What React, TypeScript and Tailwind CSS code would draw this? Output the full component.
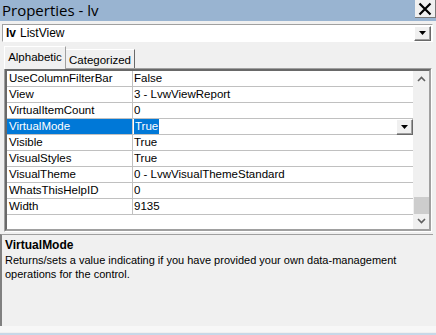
import React from 'react'

const rows: [string, string][] = [
  ['UseColumnFilterBar', 'False'],
  ['View', '3 - LvwViewReport'],
  ['VirtualItemCount', '0'],
  ['VirtualMode', 'True'],
  ['Visible', 'True'],
  ['VisualStyles', 'True'],
  ['VisualTheme', '0 - LvwVisualThemeStandard'],
  ['WhatsThisHelpID', '0'],
  ['Width', '9135'],
]

const DropArrow = () => (
  <svg width="7" height="4" viewBox="0 0 7 4">
    <path d="M0 0h7L3.5 4z" fill="#000" />
  </svg>
)

const DropButton = ({ className }: { className: string }) => (
  <div
    className={`flex items-center justify-center border border-t-white border-l-white border-r-[#696969] border-b-[#696969] bg-[#f0f0f0] shadow-[inset_-1px_-1px_0_#a0a0a0] ${className}`}
  >
    <DropArrow />
  </div>
)

export default function App() {
  return (
    <div
      className="flex h-[335px] w-[436px] flex-col overflow-hidden bg-[#f0f0f0] text-black"
      style={{ fontFamily: '"Liberation Sans", Arial, sans-serif' }}
    >
      {/* title bar */}
      <div className="flex h-[21px] items-start justify-between bg-[#99b4d1]">
        <span
          className="pl-[2px] pt-[1px] text-[15px] leading-[18px]"
          style={{ fontFamily: '"Segoe UI", "Open Sans", sans-serif' }}
        >
          Properties - lv
        </span>
        <div className="flex h-[18px] w-[21px] items-center justify-center border-r border-b border-[#7a7a7a] bg-[#f0f0f0]">
          <svg width="14" height="14" viewBox="0 0 14 14">
            <path d="M1.5 1.5L12.5 12.5M12.5 1.5L1.5 12.5" stroke="#000" strokeWidth="2.2" />
          </svg>
        </div>
      </div>

      {/* object combo */}
      <div className="mt-[3px] ml-[2px] flex h-[18px] w-[431px] items-center border border-t-[#a0a0a0] border-l-[#a0a0a0] border-r-white border-b-white bg-white">
        <div className="flex flex-1 items-center pl-[3px] text-[12px] leading-[14px]">
          <span className="font-bold">lv</span>
          <span className="ml-[4px]">ListView</span>
        </div>
        <DropButton className="mr-[1px] h-[15px] w-[17px]" />
      </div>

      {/* tabs */}
      <div className="mt-[4px] flex h-[22px] items-end pl-[4px] text-[11.5px] leading-[14px]">
        <div className="relative z-10 -mb-[1px] flex h-[23px] w-[62px] shrink-0 items-start justify-center border border-b-0 border-t-white border-l-white border-r-[#a0a0a0] bg-[#f0f0f0] pt-[3px]">
          Alphabetic
        </div>
        <div className="flex h-[19px] w-[69px] shrink-0 items-start justify-center border border-b-0 border-l-0 border-t-white border-r-[#696969] pt-[3px]">
          Categorized
        </div>
      </div>

      {/* grid frame */}
      <div className="mx-[4px] h-[164px] border border-t-[#a0a0a0] border-l-[#a0a0a0] border-r-white border-b-white">
        <div className="flex h-full border-2 border-t-[#696969] border-l-[#696969] border-r-[#a0a0a0] border-b-[#a0a0a0]">
          <div className="flex-1 bg-white text-[11.5px] leading-[15px]">
            {rows.map(([name, value]) => {
              const sel = name === 'VirtualMode'
              return (
                <div key={name} className="flex h-[16px] border-b border-[#c0c0c0]">
                  <div
                    className={`w-[126px] shrink-0 border-r border-[#c0c0c0] pl-[2px] ${sel ? 'bg-[#0078d7] text-white' : ''}`}
                  >
                    {name}
                  </div>
                  <div className="flex flex-1 items-start pl-[1px]">
                    <span className={sel ? 'bg-[#0078d7] px-[1px] text-white' : ''}>{value}</span>
                    {sel && <DropButton className="ml-auto h-[16px] w-[17px]" />}
                  </div>
                </div>
              )
            })}
          </div>
          {/* scrollbar */}
          <div className="flex w-[16px] flex-col items-center bg-[#f0f0f0]">
            <svg className="mt-[5px]" width="9" height="6" viewBox="0 0 9 6">
              <path d="M1 5L4.5 1.5L8 5" stroke="#606060" strokeWidth="1.6" fill="none" />
            </svg>
            <div className="flex-1" />
            <div className="h-[17px] w-[15px] bg-[#cdcdcd]" />
            <svg className="mb-[5px] mt-[4px]" width="9" height="6" viewBox="0 0 9 6">
              <path d="M1 1L4.5 4.5L8 1" stroke="#606060" strokeWidth="1.6" fill="none" />
            </svg>
          </div>
        </div>
      </div>

      {/* description */}
      <div className="mt-[2px] mr-[3px] flex h-[92px] flex-col border-t border-l-2 border-t-[#a0a0a0] border-l-[#808080] pl-[3px] pt-[3px] text-[11px] leading-[14px]">
        <div className="text-[12px] font-bold">VirtualMode</div>
        <div className="mt-[1px] whitespace-nowrap">
          Returns/sets a value indicating if you have provided your own data-management
          <br />
          operations for the control.
        </div>
      </div>
      <div className="h-[6px] bg-[#f7f7f7]" />
      <div className="mt-auto h-[2px] bg-[#c7d8e8]" />
    </div>
  )
}
